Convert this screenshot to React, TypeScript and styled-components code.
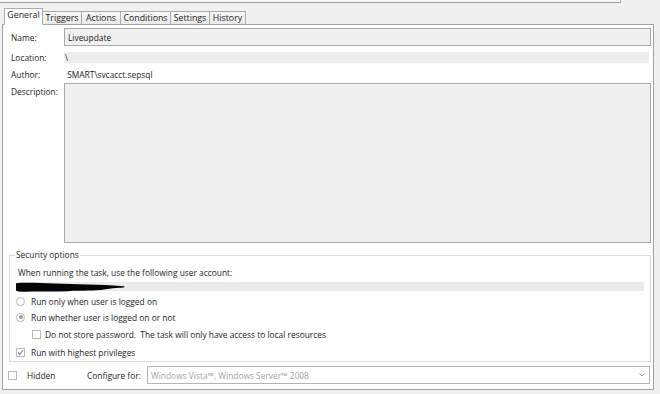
import React from "react";
import styled, { createGlobalStyle } from "styled-components";

const Global = createGlobalStyle`
  html, body { margin: 0; padding: 0; background: #f0f0f0; }
  body { font-family: "Open Sans", "Noto Sans", sans-serif; font-size: 8.4px; line-height: 11px; color: #1c1c1c; }
  * { box-sizing: border-box; }
`;

const Window = styled.div`
  width: 660px;
  height: 394px;
  background: #f0f0f0;
  display: flex;
  flex-direction: column;
  overflow: hidden;
`;

const TopEdge = styled.div`
  flex: none;
  width: 621px;
  height: 3px;
  border-bottom: 1px solid #9c9c9c;
  border-right: 1px solid #b4b4b4;
  background: #f7f7f7;
`;

const Inner = styled.div`
  margin-left: 2px;
  display: flex;
  flex-direction: column;
`;

const TabRow = styled.div`
  display: flex;
  align-items: flex-end;
  height: 22px;
  padding-left: 2px;
  margin-bottom: -1px;
  position: relative;
  z-index: 1;
`;

const Tab = styled.div<{ $active?: boolean; $w: number }>`
  width: ${(p) => p.$w}px;
  height: ${(p) => (p.$active ? 17 : 13)}px;
  margin-right: -1px;
  margin-bottom: ${(p) => (p.$active ? 0 : 1)}px;
  border: 1px solid #ababab;
  border-bottom: ${(p) => (p.$active ? "1px solid #fff" : "none")};
  background: ${(p) => (p.$active ? "#fff" : "linear-gradient(#f7f7f7, #e9e9e9)")};
  display: flex;
  align-items: center;
  justify-content: center;
  padding-bottom: ${(p) => (p.$active ? 2 : 0)}px;
  position: relative;
  z-index: ${(p) => (p.$active ? 2 : 1)};
  white-space: nowrap;
  font-size: 8.8px;
`;

const Panel = styled.div`
  width: 652px;
  height: 366px;
  background: #fff;
  border: 1px solid #a0a0a0;
  padding: 3px 2px 0 8px;
  display: flex;
  flex-direction: column;
`;

const FieldRow = styled.div<{ $mt: number }>`
  display: grid;
  grid-template-columns: 53px 1fr;
  align-items: center;
  margin-top: ${(p) => p.$mt}px;
`;

const Label = styled.div<{ $top?: boolean }>`
  align-self: ${(p) => (p.$top ? "start" : "center")};
  padding-top: ${(p) => (p.$top ? 3 : 0)}px;
  white-space: nowrap;
`;

const TextBox = styled.div<{ $h: number }>`
  height: ${(p) => p.$h}px;
  border: 1px solid #a8a8a8;
  background: #f0f0f0;
  padding: 0 3px;
  display: flex;
  align-items: center;
`;

const ReadOnly = styled.div<{ $h: number; $bg?: string }>`
  height: ${(p) => p.$h}px;
  margin-right: 2px;
  background: ${(p) => p.$bg || "transparent"};
  padding: 0 1px;
  display: flex;
  align-items: center;
  white-space: nowrap;
`;

const Group = styled.fieldset`
  margin: 6px 0 0 -2px;
  padding: 0 6px 3px 6px;
  border: 1px solid #dadada;
  min-width: 0;
`;

const Legend = styled.legend`
  padding: 0 1px;
  margin-left: -1px;
  line-height: 12px;
`;

const GroupText = styled.div<{ $mt: number }>`
  margin-top: ${(p) => p.$mt}px;
  padding-left: 2px;
  line-height: 12px;
`;

const AccountField = styled.div`
  margin-top: 3px;
  height: 9px;
  background: #ebebeb;
  position: relative;
  overflow: visible;
`;

const Scribble = styled.svg`
  position: absolute;
  left: 0;
  top: -1px;
`;

const OptionRow = styled.div<{ $mt: number; $indent?: number; $gap?: number }>`
  display: flex;
  align-items: center;
  height: 12px;
  margin-top: ${(p) => p.$mt}px;
  margin-left: ${(p) => p.$indent || 0}px;
  gap: ${(p) => p.$gap ?? 6}px;
  white-space: nowrap;
`;

const Radio = styled.span<{ $on?: boolean }>`
  width: 9px;
  height: 9px;
  border-radius: 50%;
  border: 1px solid #b9b9b9;
  background: #fff;
  display: flex;
  align-items: center;
  justify-content: center;
  &::after {
    content: "";
    width: 4px;
    height: 4px;
    border-radius: 50%;
    background: ${(p) => (p.$on ? "#9a9a9a" : "transparent")};
  }
`;

const Check = styled.span`
  width: 9px;
  height: 9px;
  border: 1px solid #b9b9b9;
  background: #fff;
  display: flex;
  align-items: center;
  justify-content: center;
  flex: none;
`;

const BottomRow = styled.div`
  display: flex;
  align-items: center;
  margin-top: 4px;
  margin-left: -3px;
  height: 18px;
  white-space: nowrap;
`;

const HiddenText = styled.span`
  margin-left: 10px;
  width: 60px;
`;

const ConfigLabel = styled.span`
  width: 60px;
`;

const Combo = styled.div`
  flex: 1;
  height: 18px;
  margin-right: 1px;
  border: 1px solid #b4b4b4;
  background: #fff;
  display: flex;
  align-items: center;
  padding: 0 4px 0 3px;
  color: #a3a3a3;
`;

const ComboText = styled.span`
  flex: 1;
`;

const Chevron = () => (
  <svg width="6" height="4" viewBox="0 0 6 4">
    <path d="M0.5 0.5 L3 3 L5.5 0.5" fill="none" stroke="#a0a0a0" strokeWidth="1" />
  </svg>
);

const Tick = () => (
  <svg width="7" height="7" viewBox="0 0 7 7">
    <path d="M1 3.5 L2.8 5.5 L6 1" fill="none" stroke="#8e8e8e" strokeWidth="1.2" />
  </svg>
);

export default function App() {
  return (
    <>
      <Global />
      <Window>
        <TopEdge />
        <Inner>
          <TabRow>
            <Tab $active $w={39}>General</Tab>
            <Tab $w={40}>Triggers</Tab>
            <Tab $w={40}>Actions</Tab>
            <Tab $w={51}>Conditions</Tab>
            <Tab $w={40}>Settings</Tab>
            <Tab $w={37}>History</Tab>
          </TabRow>
          <Panel>
            <FieldRow $mt={0}>
              <Label>Name:</Label>
              <TextBox $h={18}>Liveupdate</TextBox>
            </FieldRow>
            <FieldRow $mt={6}>
              <Label>Location:</Label>
              <ReadOnly $h={11} $bg="#eeeeee">\</ReadOnly>
            </FieldRow>
            <FieldRow $mt={5}>
              <Label>Author:</Label>
              <ReadOnly $h={12}>&nbsp;SMART\svcacct.sepsql</ReadOnly>
            </FieldRow>
            <FieldRow $mt={3}>
              <Label $top>Description:</Label>
              <TextBox $h={160} />
            </FieldRow>
            <Group>
              <Legend>Security options</Legend>
              <GroupText $mt={6}>When running the task, use the following user account:</GroupText>
              <AccountField>
                <Scribble width="110" height="12" viewBox="0 0 110 12">
                  <path
                    d="M0 2.2 C12 1.2 26 2.4 38 2.6 C50 2.8 60 3.4 72 3.6 C84 3.8 96 4.4 108 5.2 C109.5 5.8 108 6.6 104 6.8 C98 7.2 92 7.6 88 8.6 C80 10.2 66 9.4 52 10.2 C38 11 22 10.2 10 10.8 C5 11 1 10.4 0 9.4 Z"
                    fill="#050505"
                  />
                </Scribble>
              </AccountField>
              <OptionRow $mt={4}>
                <Radio />
                <span>Run only when user is logged on</span>
              </OptionRow>
              <OptionRow $mt={4}>
                <Radio $on />
                <span>Run whether user is logged on or not</span>
              </OptionRow>
              <OptionRow $mt={5} $indent={16} $gap={4}>
                <Check />
                <span>Do not store password.&nbsp; The task will only have access to local resources</span>
              </OptionRow>
              <OptionRow $mt={6}>
                <Check>
                  <Tick />
                </Check>
                <span>Run with highest privileges</span>
              </OptionRow>
            </Group>
            <BottomRow>
              <Check />
              <HiddenText>Hidden</HiddenText>
              <ConfigLabel>Configure for:</ConfigLabel>
              <Combo>
                <ComboText>Windows Vista™, Windows Server™ 2008</ComboText>
                <Chevron />
              </Combo>
            </BottomRow>
          </Panel>
        </Inner>
      </Window>
    </>
  );
}
